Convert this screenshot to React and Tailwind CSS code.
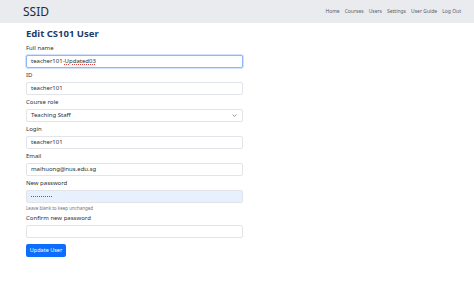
import React from "react";

const font = { fontFamily: '"Noto Sans", "Open Sans", sans-serif' };

function Field({ label, children, help }) {
  return (
    <div className="flex flex-col">
      <label className="text-[6px] leading-[8px] text-[#2b2f33] mb-[3px]">{label}</label>
      {children}
      {help && <p className="text-[4.5px] leading-[6px] text-[#6c757d] mt-[1.5px]">{help}</p>}
    </div>
  );
}

function Input({ value, focused, filled, children }) {
  return (
    <div
      className={`h-[13px] rounded-[2px] border flex items-center px-[4px] text-[6px] text-[#2b2f33] ${
        focused
          ? "border-[#8fb6f5] ring-[1px] ring-[#d3e3fc]"
          : "border-[#e1e4e8]"
      } ${filled ? "bg-[#e8f0fe]" : "bg-white"}`}
    >
      {children || value}
    </div>
  );
}

export default function App() {
  const links = ["Home", "Courses", "Users", "Settings", "User Guide", "Log Out"];
  return (
    <div className="w-[474px] h-[281px] bg-white overflow-hidden" style={font}>
      <nav className="h-[23px] bg-[#e9ebee] flex items-center justify-between pl-[23px] pr-[13px]">
        <span className="text-[12px] text-[#1f2d3d] leading-none">SSID</span>
        <div className="flex gap-[5px] text-[5px] text-[#5c636a]">
          {links.map((l) => (
            <span key={l}>{l}</span>
          ))}
        </div>
      </nav>

      <main className="pl-[26px] w-[243px] pt-[4px]">
        <h1 className="text-[9.5px] font-bold text-[#1d3c6b] leading-[13px] mb-[4px]">Edit CS101 User</h1>
        <div className="flex flex-col gap-[3px]">
          <Field label="Full name">
            <Input focused>
              <span>
                teacher101-
                <span className="underline decoration-dotted decoration-[#e04040] underline-offset-[1px]">Updated03</span>
              </span>
            </Input>
          </Field>
          <Field label="ID">
            <Input value="teacher101" />
          </Field>
          <Field label="Course role">
            <div className="h-[13px] rounded-[2px] border border-[#e1e4e8] flex items-center justify-between px-[4px] text-[6px] text-[#2b2f33]">
              <span>Teaching Staff</span>
              <svg width="5" height="5" viewBox="0 0 16 16" fill="none" stroke="#555" strokeWidth="2" strokeLinecap="round" strokeLinejoin="round" className="mr-[1px]">
                <path d="m3 6 5 5 5-5" />
              </svg>
            </div>
          </Field>
          <Field label="Login">
            <Input value="teacher101" />
          </Field>
          <Field label="Email">
            <Input value="maihuong@nus.edu.sg" />
          </Field>
          <Field label="New password" help="Leave blank to keep unchanged">
            <Input filled>
              <span className="flex gap-[1px]">
                {Array.from({ length: 11 }).map((_, i) => (
                  <span key={i} className="w-[1px] h-[1px] rounded-full bg-[#333]" />
                ))}
              </span>
            </Input>
          </Field>
          <Field label="Confirm new password">
            <Input value="" />
          </Field>
        </div>
        <button className="mt-[6px] h-[13px] w-[40px] rounded-[2px] bg-[#0d6efd] text-white text-[5.5px] flex items-center justify-center">
          Update User
        </button>
      </main>
    </div>
  );
}
